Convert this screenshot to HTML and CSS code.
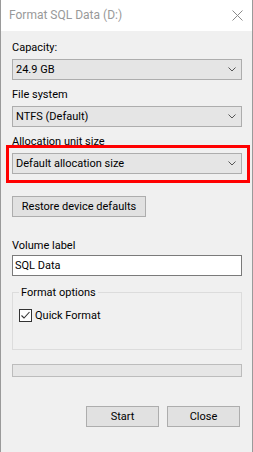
FILE: index.html
```html
<!DOCTYPE html>
<html lang="en">
<head>
    <meta charset="UTF-8">
    <title>Format SQL Data (D:)</title>
    <link rel="stylesheet" href="styles.css">
</head>
<body>
    <div class="window">
        <!-- Title bar -->
        <div class="title-bar">
            <span class="title">Format SQL Data (D:)</span>
            <svg class="close-icon" width="11" height="11" viewBox="0 0 11 11">
                <path d="M0.5 0.5 L10.5 10.5 M10.5 0.5 L0.5 10.5" stroke="#8a8a8a" stroke-width="1" fill="none"/>
            </svg>
        </div>

        <div class="content">
            <div class="field-label">Capacity:</div>
            <div class="combo">
                <span>24.9 GB</span>
                <svg class="chevron" width="8" height="5" viewBox="0 0 8 5"><path d="M0.5 0.5 L4 4 L7.5 0.5" stroke="#555" fill="none"/></svg>
            </div>

            <div class="field-label">File system</div>
            <div class="combo">
                <span>NTFS (Default)</span>
                <svg class="chevron" width="8" height="5" viewBox="0 0 8 5"><path d="M0.5 0.5 L4 4 L7.5 0.5" stroke="#555" fill="none"/></svg>
            </div>

            <div class="field-label">Allocation unit size</div>
            <div class="combo marked">
                <span>Default allocation size</span>
                <svg class="chevron" width="8" height="5" viewBox="0 0 8 5"><path d="M0.5 0.5 L4 4 L7.5 0.5" stroke="#555" fill="none"/></svg>
                <div class="highlight"></div>
            </div>

            <button class="btn restore">Restore device defaults</button>

            <div class="field-label volume">Volume label</div>
            <div class="textbox">SQL Data</div>

            <!-- Format options -->
            <fieldset class="options">
                <legend>Format options</legend>
                <label class="check-row">
                    <svg class="checkbox" width="13" height="13" viewBox="0 0 13 13">
                        <rect x="0.5" y="0.5" width="12" height="12" fill="#fff" stroke="#333"/>
                        <path d="M2.5 6.5 L5 9 L10.5 3" stroke="#333" stroke-width="1.1" fill="none"/>
                    </svg>
                    Quick Format
                </label>
            </fieldset>

            <div class="progress"></div>

            <div class="actions">
                <button class="btn">Start</button>
                <button class="btn">Close</button>
            </div>
        </div>
    </div>
</body>
</html>
```
FILE: styles.css
```css
/* Page */
body {
    margin: 0;
    background-color: #f0f0f0;
    font-family: Roboto, "Noto Sans", sans-serif;
    font-size: 11px;
    color: #000;
}

/* Dialog window */
.window {
    width: 253px;
    height: 452px;
    box-sizing: border-box;
    border-left: 1px solid #9a9a9a;
    border-right: 1px solid #9a9a9a;
    background-color: #f0f0f0;
}

.title-bar {
    height: 31px;
    background-color: #fff;
    display: flex;
    align-items: center;
    justify-content: space-between;
    padding: 0 9px 0 8px;
}

.title {
    color: #999;
    font-size: 12px;
    margin-top: -2px;
}

.close-icon {
    margin-top: -1px;
}

/* Dialog body */
.content {
    padding: 9px 10px 0 11px;
    display: flex;
    flex-direction: column;
}

.field-label {
    line-height: 15px;
    margin-bottom: 4px;
}

.combo + .field-label {
    margin-top: 7px;
}

.combo {
    position: relative;
    height: 21px;
    box-sizing: border-box;
    border: 1px solid #adadad;
    background-color: #e5e5e5;
    display: flex;
    align-items: center;
    justify-content: space-between;
    padding: 0 5px 0 3px;
}

.highlight {
    position: absolute;
    top: -9px;
    left: -7px;
    right: -9px;
    bottom: -10px;
    border: 3px solid #f00;
}

.btn {
    font-family: inherit;
    font-size: 11px;
    color: #000;
    height: 21px;
    box-sizing: border-box;
    border: 1px solid #adadad;
    background-color: #e1e1e1;
    padding: 0;
    border-radius: 0;
}

.restore {
    align-self: flex-start;
    width: 134px;
    margin-top: 22px;
}

.field-label.volume {
    margin-top: 21px;
    margin-bottom: 2px;
}

.textbox {
    height: 21px;
    box-sizing: border-box;
    border: 1px solid #7a7a7a;
    background-color: #fff;
    padding: 0 2px;
    display: flex;
    align-items: center;
}

/* Group box */
.options {
    margin: 9px 0 0;
    padding: 9px 6px 27px;
    border: 1px solid #dcdcdc;
    min-inline-size: 0;
}

.options legend {
    line-height: 15px;
    padding: 0 2px;
    margin-left: 0;
}

.check-row {
    display: flex;
    align-items: center;
    gap: 3px;
    height: 13px;
}

.progress {
    margin-top: 14px;
    height: 13px;
    box-sizing: border-box;
    border: 1px solid #bcbcbc;
    background-color: #e6e6e6;
}

.actions {
    display: flex;
    justify-content: flex-end;
    gap: 8px;
    margin-top: 29px;
    padding-right: 2px;
}

.actions .btn {
    width: 73px;
}
```
